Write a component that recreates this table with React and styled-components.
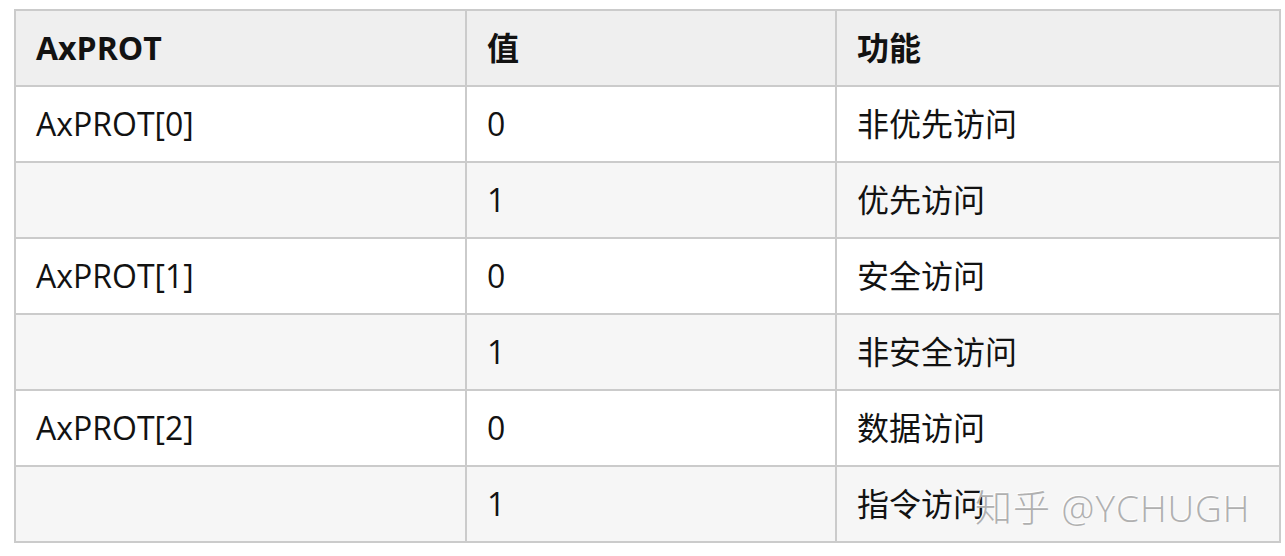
import React from "react";
import styled, { createGlobalStyle } from "styled-components";

const Global = createGlobalStyle`
  html, body { margin: 0; padding: 0; background: #ffffff; }
  body { font-family: "Open Sans", "Noto Sans CJK SC", sans-serif; }
`;

const Page = styled.div`
  position: relative;
  width: 1285px;
  height: 556px;
  padding: 9px 0 0 14px;
  box-sizing: border-box;
`;

const Table = styled.table`
  border-collapse: collapse;
  table-layout: fixed;
  width: 1265px;
  font-family: "Open Sans", "Noto Sans CJK SC", sans-serif;
  font-size: 32px;
  color: #121212;
`;

const Col = styled.col`
  width: ${(p) => p.$w}px;
`;

const Row = styled.tr`
  background: ${(p) => (p.$head ? "#efefef" : p.$alt ? "#f6f6f6" : "#ffffff")};
`;

const Cell = styled.td`
  border: 2px solid #cbcbcb;
  height: 76px;
  padding: 0 20px;
  box-sizing: border-box;
  vertical-align: middle;
  text-align: left;
  white-space: nowrap;
  font-weight: 400;
  line-height: 1;
`;

const HeadCell = styled(Cell).attrs({ as: "th" })`
  font-weight: 700;
`;

const Watermark = styled.div`
  position: absolute;
  left: 975px;
  top: 479px;
  font-family: "Open Sans", "Noto Sans CJK SC", sans-serif;
  font-weight: 300;
  font-size: 37px;
  letter-spacing: 1px;
  color: #b0b0b0;
  text-shadow: -1px -1px 0 rgba(255, 255, 255, 0.95);
  white-space: nowrap;
  pointer-events: none;
`;

const rows = [
  ["AxPROT[0]", "0", "非优先访问"],
  ["", "1", "优先访问"],
  ["AxPROT[1]", "0", "安全访问"],
  ["", "1", "非安全访问"],
  ["AxPROT[2]", "0", "数据访问"],
  ["", "1", "指令访问"],
];

export default function App() {
  return (
    <>
      <Global />
      <Page>
        <Table>
          <colgroup>
            <Col $w={451} />
            <Col $w={370} />
            <Col $w={444} />
          </colgroup>
          <thead>
            <Row $head>
              <HeadCell>AxPROT</HeadCell>
              <HeadCell>值</HeadCell>
              <HeadCell>功能</HeadCell>
            </Row>
          </thead>
          <tbody>
            {rows.map((r, i) => (
              <Row key={i} $alt={i % 2 === 1}>
                <Cell>{r[0]}</Cell>
                <Cell>{r[1]}</Cell>
                <Cell>{r[2]}</Cell>
              </Row>
            ))}
          </tbody>
        </Table>
        <Watermark>知乎 @YCHUGH</Watermark>
      </Page>
    </>
  );
}
